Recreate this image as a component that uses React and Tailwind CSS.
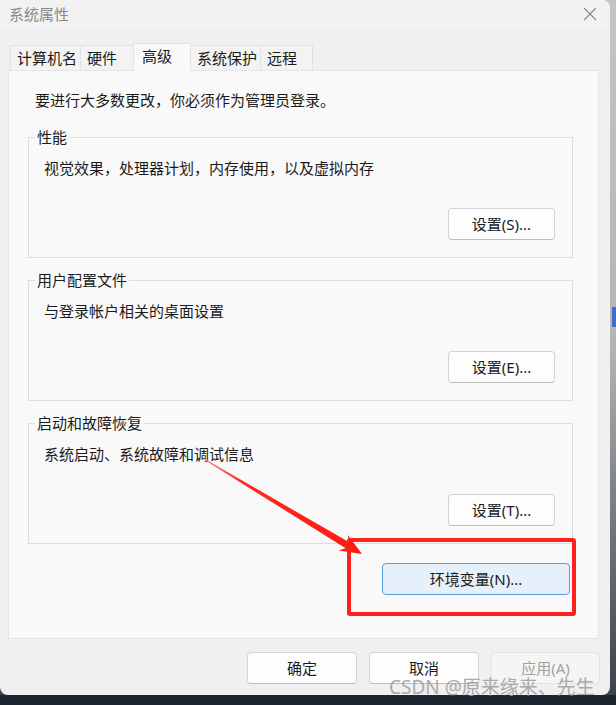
import React from "react";

const tabs = [
  { label: "计算机名", w: "w-[71px] border-l" },
  { label: "硬件", w: "w-[53px]" },
  { label: "高级", active: true },
  { label: "系统保护", w: "w-[70px]" },
  { label: "远程", w: "w-[52px]" },
];

const groups = [
  { title: "性能", desc: "视觉效果，处理器计划，内存使用，以及虚拟内存", btn: "设置(S)..." },
  { title: "用户配置文件", desc: "与登录帐户相关的桌面设置", btn: "设置(E)..." },
  { title: "启动和故障恢复", desc: "系统启动、系统故障和调试信息", btn: "设置(T)..." },
];

function Btn({ children, className = "" }) {
  return (
    <button
      type="button"
      className={`h-[32px] rounded-[4px] border border-[#d3d3d3] border-b-[#bdbdbd] bg-[#fdfdfd] text-[15px] leading-[20px] text-[#1b1b1b] ${className}`}
    >
      {children}
    </button>
  );
}

function Group({ title, desc, btn, first }) {
  return (
    <fieldset
      className={`ml-[19px] w-[545px] border border-[#dddddd] ${first ? "mt-[17px]" : "mt-[12px]"}`}
    >
      <legend className="ml-[6px] px-[2px] text-[15px] leading-[20px]">{title}</legend>
      <div className="pl-[15px] pr-[17px] pt-[11px] pb-[17px]">
        <p className="text-[15px] leading-[20px]">{desc}</p>
        <div className="mt-[30px] flex justify-end">
          <Btn className="w-[107px]">{btn}</Btn>
        </div>
      </div>
    </fieldset>
  );
}

function App() {
  return (
    <div className="w-[616px] h-[705px] overflow-hidden bg-[#1c2631] font-['Noto_Sans','Noto_Sans_CJK_SC',sans-serif] text-[#1b1b1b]">
      <div className="flex h-[695px] bg-gradient-to-b from-[#c4c4c4] via-[#b4b4b4] to-[#3d434a]">
        <div className="relative w-[610px] h-[695px] rounded-tr-[8px] rounded-b-[8px] bg-[#f0f0f0]">
          {/* title bar */}
          <div className="h-[28px] flex items-center justify-between pl-[9px] pr-[13px] rounded-tr-[8px] bg-[#f2f2f2]">
            <span className="text-[15px] leading-[20px] text-[#8a8a8a]">系统属性</span>
            <svg width="14" height="14" viewBox="0 0 14 14">
              <path d="M1 1 L13 13 M13 1 L1 13" stroke="#8a8a8a" strokeWidth="1.1" fill="none" />
            </svg>
          </div>

          {/* tabs */}
          <div className="mt-[15px] h-[27px] flex items-end pl-[10px]">
            {tabs.map((t) =>
              t.active ? (
                <div
                  key={t.label}
                  className="relative z-10 -ml-px -mb-px w-[58px] h-[28px] border-l border-r border-t border-[#e3e3e3] bg-[#f9f9f9] pl-[8px] pb-[3px] flex items-center text-[15px]"
                >
                  {t.label}
                </div>
              ) : (
                <div
                  key={t.label}
                  className={`${t.w} h-[25px] border-t border-r border-[#e1e1e1] bg-[#f3f3f3] pl-[6px] flex items-center text-[15px]`}
                >
                  {t.label}
                </div>
              )
            )}
          </div>

          {/* panel */}
          <div className="ml-[8px] w-[591px] h-[569px] border border-[#e5e5e5] bg-[#f9f9f9] pt-[19px]">
            <p className="pl-[26px] text-[15px] leading-[20px]">要进行大多数更改，你必须作为管理员登录。</p>
            {groups.map((g, i) => (
              <Group key={g.title} {...g} first={i === 0} />
            ))}
            <div className="mt-[19px] flex justify-end pr-[28px]">
              <button
                type="button"
                className="w-[188px] h-[32px] rounded-[4px] border border-[#5a9fe0] bg-[#e6f0fa] text-[15px] leading-[20px]"
              >
                环境变量(N)...
              </button>
            </div>
          </div>

          {/* footer buttons */}
          <div className="mt-[13px] flex justify-end gap-[12px] pr-[10px]">
            <Btn className="w-[110px]">确定</Btn>
            <Btn className="w-[110px]">取消</Btn>
            <button
              type="button"
              className="w-[109px] h-[32px] rounded-[4px] border border-[#e3e3e3] bg-[#f5f5f5] text-[15px] leading-[20px] text-[#a0a0a0]"
            >
              应用(A)
            </button>
          </div>

          {/* annotation: red box + arrow */}
          <div className="absolute left-[347px] top-[538px] w-[229px] h-[78px] border-[4px] border-[#ff2020] rounded-[3px] pointer-events-none" />
          <svg className="absolute left-0 top-0 pointer-events-none" width="610" height="695" viewBox="0 0 610 695">
            <defs>
              <linearGradient id="arw" x1="204" y1="459" x2="362" y2="554" gradientUnits="userSpaceOnUse">
                <stop offset="0" stopColor="#ff8a8a" />
                <stop offset="0.25" stopColor="#ff2a22" />
                <stop offset="1" stopColor="#ff1a12" />
              </linearGradient>
            </defs>
            <polygon
              points="204.3,458.6 349.2,542.3 347.8,535 362,554 338.5,550.4 345.6,548.2 203.7,459.4"
              fill="url(#arw)"
            />
          </svg>

          {/* watermark */}
          <span className="absolute left-[389px] top-[675px] text-[19px] leading-[24px] text-[#a3a3a3] opacity-90 whitespace-nowrap pointer-events-none">
            CSDN @原来缘来、先生
          </span>
        </div>

        {/* desktop edge on the right */}
        <div className="relative w-[6px] h-[695px]">
          <div className="mt-[307px] ml-[2px] w-[4px] h-[20px] bg-[#3b6fc8]" />
        </div>
      </div>
    </div>
  );
}

export default App;
